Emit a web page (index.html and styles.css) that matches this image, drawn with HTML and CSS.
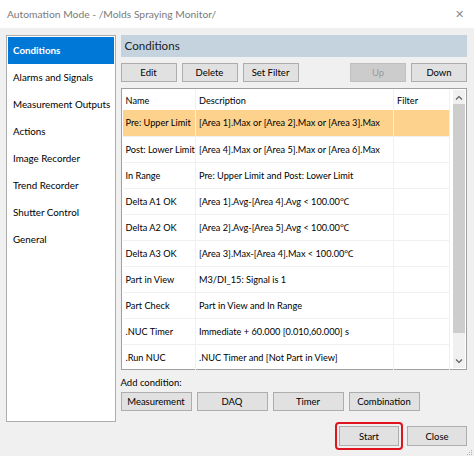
FILE: index.html
```html
<!doctype html>
<html lang="en">
<head>
    <meta charset="UTF-8">
    <title>Automation Mode</title>
    <link rel="stylesheet" href="styles.css">
</head>
<body>
<div class="titlebar">
    <span class="title">Automation Mode - /Molds Spraying Monitor/</span>
    <span class="close-x">&#x2715;</span>
</div>
<div class="main">
    <ul class="nav">
        <li class="active">Conditions</li>
        <li>Alarms and Signals</li>
        <li>Measurement Outputs</li>
        <li>Actions</li>
        <li>Image Recorder</li>
        <li>Trend Recorder</li>
        <li>Shutter Control</li>
        <li>General</li>
    </ul>
    <div class="panel">
        <div class="panel-head">Conditions</div>
        <div class="toolbar">
            <button class="btn">Edit</button>
            <button class="btn">Delete</button>
            <button class="btn">Set Filter</button>
            <span class="spacer"></span>
            <button class="btn disabled">Up</button>
            <button class="btn">Down</button>
        </div>
        <div class="list">
            <table class="grid">
                <thead>
                <tr><th class="c-name">Name</th><th class="c-desc">Description</th><th class="c-filter">Filter</th></tr>
                </thead>
                <tbody>
                <tr class="sel"><td>Pre: Upper Limit</td><td>[Area 1].Max or [Area 2].Max or [Area 3].Max</td><td></td></tr>
                <tr><td>Post: Lower Limit</td><td>[Area 4].Max or [Area 5].Max or [Area 6].Max</td><td></td></tr>
                <tr><td>In Range</td><td>Pre: Upper Limit and Post: Lower Limit</td><td></td></tr>
                <tr><td>Delta A1 OK</td><td>[Area 1].Avg-[Area 4].Avg &lt; 100.00&#8451;</td><td></td></tr>
                <tr><td>Delta A2 OK</td><td>[Area 2].Avg-[Area 5].Avg &lt; 100.00&#8451;</td><td></td></tr>
                <tr><td>Delta A3 OK</td><td>[Area 3].Max-[Area 4].Max &lt; 100.00&#8451;</td><td></td></tr>
                <tr><td>Part in View</td><td>M3/DI_15: Signal is 1</td><td></td></tr>
                <tr><td>Part Check</td><td>Part in View and In Range</td><td></td></tr>
                <tr><td>.NUC Timer</td><td>Immediate + 60.000 [0.010,60.000] s</td><td></td></tr>
                <tr><td>.Run NUC</td><td>.NUC Timer and [Not Part in View]</td><td></td></tr>
                </tbody>
            </table>
            <div class="scrollbar">
                <svg class="arrow" width="10" height="8" viewBox="0 0 10 8"><path d="M2 5.5 L5 2.5 L8 5.5" fill="none" stroke="#606060" stroke-width="1.2"/></svg>
                <div class="thumb"></div>
                <svg class="arrow" width="10" height="8" viewBox="0 0 10 8"><path d="M2 2.5 L5 5.5 L8 2.5" fill="none" stroke="#606060" stroke-width="1.2"/></svg>
            </div>
        </div>
        <div class="add-label">Add condition:</div>
        <div class="add-row">
            <button class="btn wide">Measurement</button>
            <button class="btn wide">DAQ</button>
            <button class="btn wide">Timer</button>
            <button class="btn wide">Combination</button>
        </div>
    </div>
</div>
<div class="footer">
    <span class="start-ring"><button class="btn foot">Start</button></span>
    <button class="btn foot">Close</button>
    <svg class="grip" width="8" height="8" viewBox="0 0 8 8">
        <rect x="6" y="2" width="1" height="1" fill="#b0b0b0"/>
        <rect x="4" y="4" width="1" height="1" fill="#b0b0b0"/>
        <rect x="6" y="4" width="1" height="1" fill="#b0b0b0"/>
        <rect x="2" y="6" width="1" height="1" fill="#b0b0b0"/>
        <rect x="4" y="6" width="1" height="1" fill="#b0b0b0"/>
        <rect x="6" y="6" width="1" height="1" fill="#b0b0b0"/>
    </svg>
</div>
</body>
</html>
```

FILE: styles.css
```css
*, *::after, *::before {
    box-sizing: border-box;
    margin: 0;
    padding: 0;
}

body {
    width: 474px;
    height: 456px;
    background-color: #f0f0f0;
    font-family: Lato, "Noto Sans", sans-serif;
    font-size: 9.5px;
    color: #000;
    overflow: hidden;
}

.titlebar {
    height: 28px;
    background-color: #fff;
    display: flex;
    align-items: center;
    justify-content: space-between;
    padding: 0 10px 0 7px;
}

.title {
    color: #7a7a7a;
    font-size: 10.3px;
}

.close-x {
    color: #8a8a8a;
    font-size: 11px;
}

.main {
    display: flex;
    gap: 5px;
    padding: 7px 7px 0 6px;
}

.nav {
    list-style: none;
    width: 110px;
    height: 387px;
    background-color: #fff;
    border: 1px solid #adadad;
    padding: 1px;
}

.nav li {
    height: 27px;
    line-height: 27px;
    padding-left: 5px;
    font-size: 9.8px;
    white-space: nowrap;
}

.nav li.active {
    background-color: #0078d7;
    color: #fff;
    font-weight: bold;
}

.panel {
    flex: 1;
    display: flex;
    flex-direction: column;
}

.panel-head {
    height: 22px;
    line-height: 22px;
    background-color: #c5d3df;
    padding-left: 4px;
    font-size: 11.6px;
    color: #222;
}

.toolbar {
    display: flex;
    gap: 5px;
    margin-top: 6px;
}

.spacer {
    flex: 1;
}

.btn {
    width: 56px;
    height: 19px;
    background-color: #e1e1e1;
    border: 1px solid #adadad;
    font-family: inherit;
    font-size: 9.5px;
    color: #000;
}

.btn.disabled {
    background-color: #cccccc;
    border-color: #bfbfbf;
    color: #9a9a9a;
}

.list {
    display: flex;
    margin-top: 6px;
    height: 282px;
    background-color: #fff;
    border: 1px solid #a0a0a0;
    padding: 1px;
}

.grid {
    border-collapse: collapse;
    width: 327px;
    table-layout: fixed;
    font-size: 9.2px;
}

.grid th,
.grid td {
    text-align: left;
    font-weight: normal;
    white-space: nowrap;
    overflow: hidden;
    padding-left: 3px;
    border-right: 1px solid #f0f0f0;
    border-bottom: 1px solid #f0f0f0;
}

.grid th {
    height: 20px;
    border-bottom: none;
}

.grid td {
    height: 26px;
}

.c-name { width: 73px; }
.c-desc { width: 198px; }
.c-filter { width: 56px; }

.grid tr.sel td {
    background-color: #fdd28c;
}

.scrollbar {
    flex: 1;
    margin-left: 3px;
    display: flex;
    flex-direction: column;
    align-items: center;
    background-color: #f0f0f0;
    padding: 4px 0 3px;
}

.arrow {
    flex: none;
}

.thumb {
    flex: 1;
    width: 12px;
    margin: 2px 0 24px;
    background-color: #cdcdcd;
}

.add-label {
    margin-top: 7px;
}

.add-row {
    display: flex;
    gap: 5px;
    margin-top: 4px;
}

.btn.wide {
    width: 71px;
}

.footer {
    position: relative;
    display: flex;
    justify-content: flex-end;
    align-items: center;
    gap: 4px;
    padding: 0 7px 0 0;
}

.start-ring {
    display: flex;
    padding: 2px;
    border: 2px solid #e0141e;
    border-radius: 4px;
}

.btn.foot {
    width: 60px;
    height: 20px;
}

.grip {
    position: absolute;
    right: 1px;
    bottom: -6px;
}
```
